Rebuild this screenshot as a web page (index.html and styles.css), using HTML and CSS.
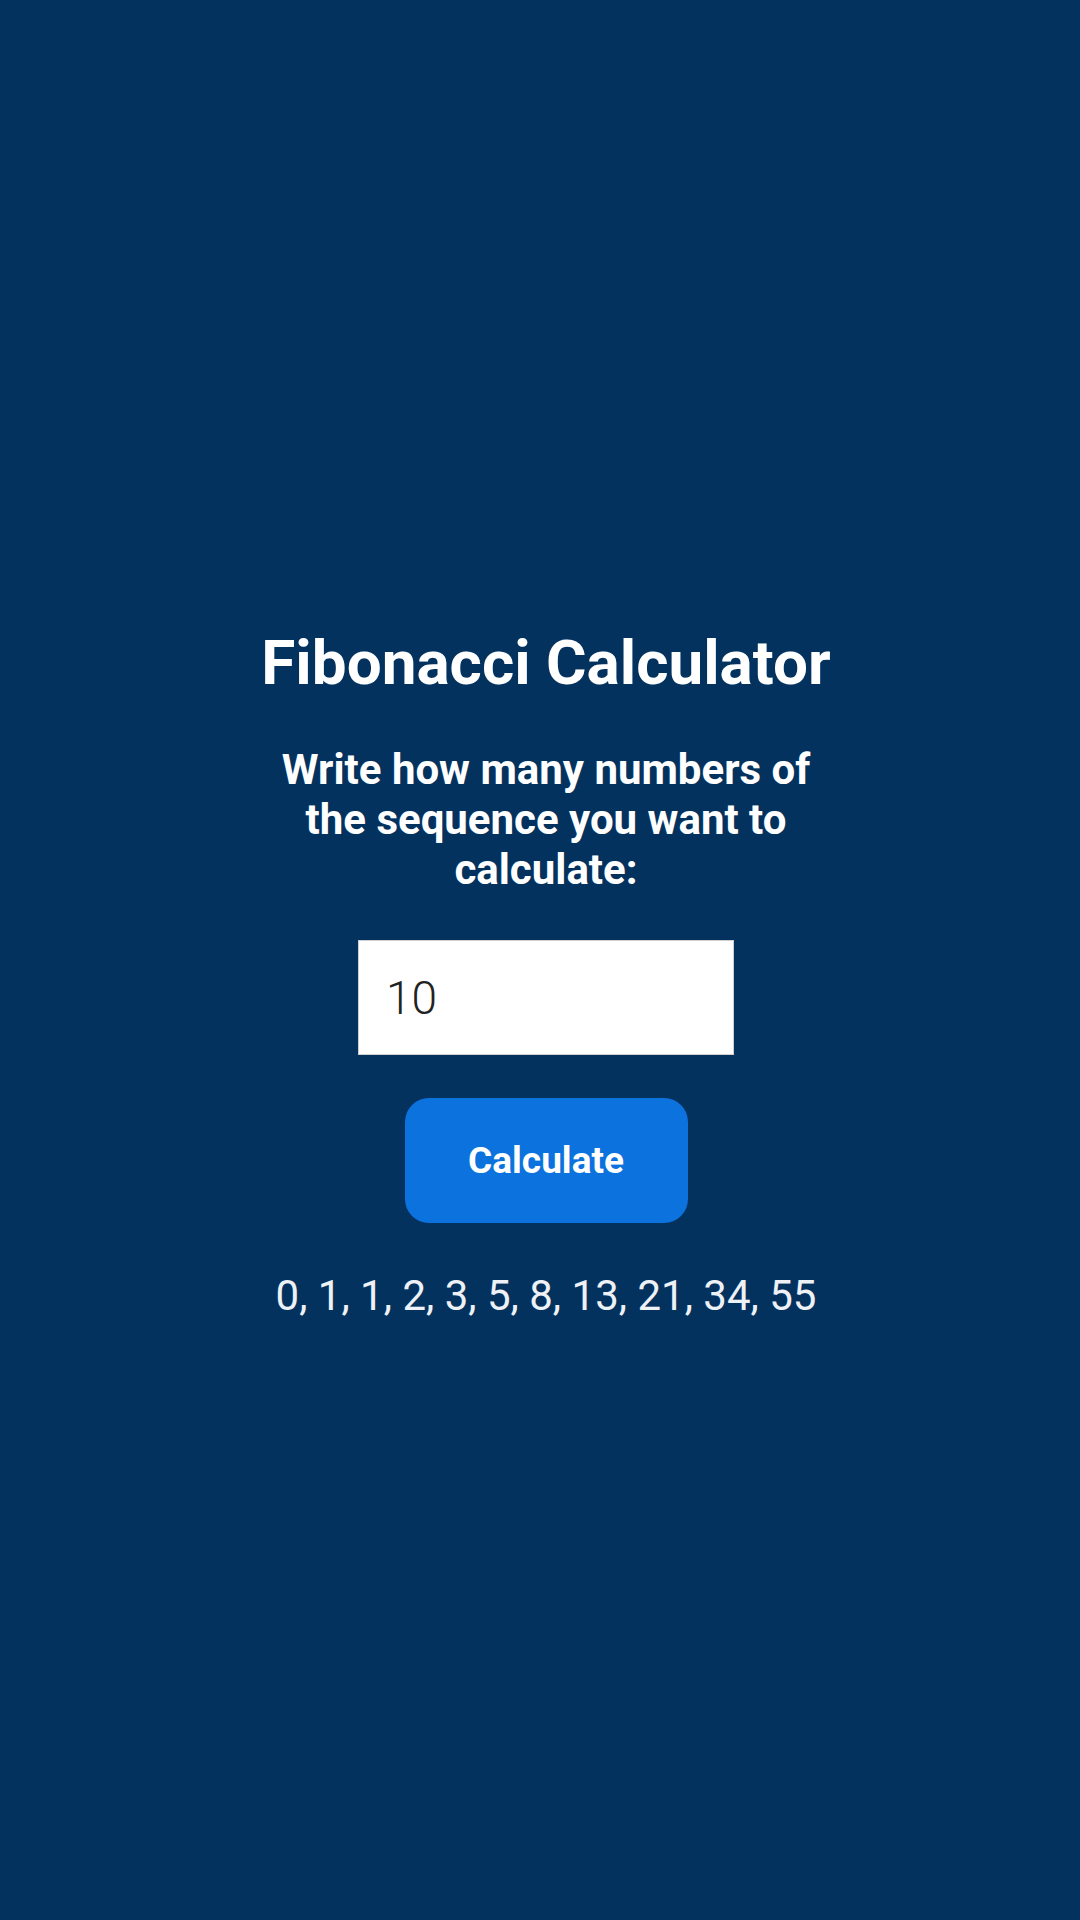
FILE: index.html
```html
<!DOCTYPE html>
<html lang="en">
<head>
<meta charset="utf-8">
<title>Fibonacci Calculator</title>
<link rel="stylesheet" href="styles.css">
</head>
<body>
<main class="screen">
  <h1 class="title">Fibonacci Calculator</h1>
  <p class="prompt">Write how many numbers of the sequence you want to calculate:</p>
  <input class="count-input" type="text" value="10">
  <button class="calc-btn" type="button">Calculate</button>
  <p class="result">0, 1, 1, 2, 3, 5, 8, 13, 21, 34, 55</p>
</main>
</body>
</html>
```

FILE: styles.css
```css
html, body {
  margin: 0;
  padding: 0;
  width: 1080px;
  height: 1920px;
  background: #03325f;
  font-family: Roboto, "Noto Sans", "Liberation Sans", sans-serif;
}

.screen {
  box-sizing: border-box;
  width: 1080px;
  height: 1920px;
  padding: 626px 0 0 12px;
  display: flex;
  flex-direction: column;
  align-items: center;
}

.title {
  margin: 0;
  font-size: 62px;
  font-weight: 700;
  line-height: normal;
  color: #ffffff;
  text-align: center;
}

.prompt {
  margin: 46px 0 0 0;
  max-width: 570px;
  font-size: 42px;
  font-weight: 700;
  line-height: 50px;
  color: #ffffff;
  text-align: center;
}

.count-input {
  box-sizing: border-box;
  margin-top: 45px;
  width: 376px;
  height: 115px;
  padding: 0 0 0 27px;
  border: 1px solid #cfcfcf;
  border-radius: 0;
  background: #ffffff;
  font-family: Roboto, "Noto Sans", sans-serif;
  font-size: 46px;
  font-weight: 300;
  color: #222222;
  outline: none;
}

.calc-btn {
  box-sizing: border-box;
  margin-top: 43px;
  width: 283px;
  height: 125px;
  border: none;
  border-radius: 24px;
  background: #0c72dd;
  color: #ffffff;
  font-family: Roboto, "Noto Sans", sans-serif;
  font-size: 37px;
  font-weight: 700;
  padding: 0;
}

.result {
  margin: 48px 0 0 0;
  font-size: 42px;
  font-weight: 400;
  line-height: normal;
  color: #eef1f5;
  text-align: center;
}
```
